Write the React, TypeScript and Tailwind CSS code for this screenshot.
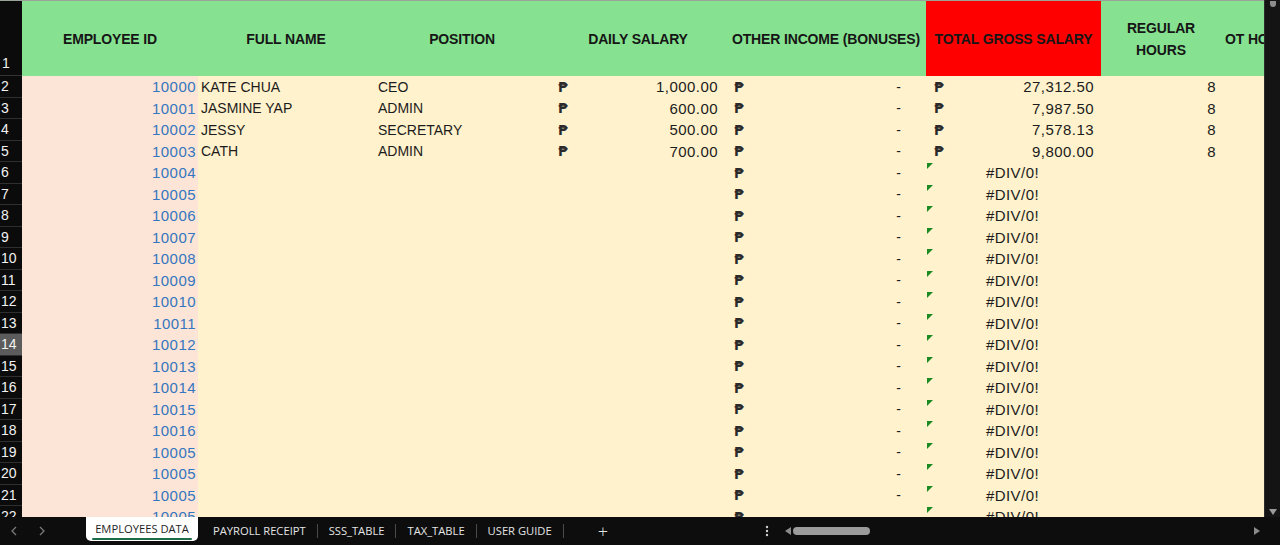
const cols = "grid grid-cols-[22px_176px_176px_176px_176px_200px_175px_120px_100px]";

const filled = [
  { id: "10000", name: "KATE CHUA", pos: "CEO", daily: "1,000.00", gross: "27,312.50" },
  { id: "10001", name: "JASMINE YAP", pos: "ADMIN", daily: "600.00", gross: "7,987.50" },
  { id: "10002", name: "JESSY", pos: "SECRETARY", daily: "500.00", gross: "7,578.13" },
  { id: "10003", name: "CATH", pos: "ADMIN", daily: "700.00", gross: "9,800.00" },
];

const blankIds = [
  "10004", "10005", "10006", "10007", "10008", "10009", "10010", "10011", "10012",
  "10013", "10014", "10015", "10016", "10005", "10005", "10005", "10005",
];

const rows = [
  ...filled.map((r) => ({ ...r, hours: "8", error: false })),
  ...blankIds.map((id) => ({ id, name: "", pos: "", daily: "", gross: "", hours: "", error: true })),
];

const tabs = ["PAYROLL RECEIPT", "SSS_TABLE", "TAX_TABLE", "USER GUIDE"];

const num = "text-[15px] tracking-[0.45px]";

function Peso() {
  return <span className="font-['DejaVu_Sans',sans-serif] text-[14px] font-bold text-[#2a2a2a]">₱</span>;
}

function HeaderRow() {
  const th = "flex items-center justify-center text-center font-bold text-[14px] tracking-[-0.15px] leading-[22px] text-[#161616]";
  return (
    <div className={`${cols} h-[76px] border-t border-[#9aa39a]`}>
      <div className="flex items-end bg-[#0b0b0b] pl-[2px] pb-[1px] text-[14px] text-[#f2f2f2] border-b border-[#333]">1</div>
      <div className={`${th} bg-[#86e291]`}>EMPLOYEE ID</div>
      <div className={`${th} bg-[#86e291]`}>FULL NAME</div>
      <div className={`${th} bg-[#86e291]`}>POSITION</div>
      <div className={`${th} bg-[#86e291]`}>DAILY SALARY</div>
      <div className={`${th} bg-[#86e291] whitespace-nowrap`}>OTHER INCOME (BONUSES)</div>
      <div className={`${th} bg-[#ff0000] text-[#2b0000]`}>TOTAL GROSS SALARY</div>
      <div className={`${th} bg-[#86e291]`}>
        REGULAR
        <br />
        HOURS
      </div>
      <div className={`${th} bg-[#86e291] justify-start pl-[4px] whitespace-nowrap`}>OT HOURS</div>
    </div>
  );
}

type RowData = (typeof rows)[number];

function DataRow({ row, n }: { row: RowData; n: number }) {
  const cell = "flex items-center h-full text-[14px] leading-none text-[#1c1c1c] bg-[#fff2cc] whitespace-nowrap overflow-hidden";
  return (
    <div className={`${cols} h-[21.5px]`}>
      <div
        className={`flex items-center pl-[1px] text-[14px] leading-none text-[#f2f2f2] border-b border-[#2f2f2f] ${
          n === 14 ? "bg-[#5c5c5c]" : "bg-[#0b0b0b]"
        }`}
      >
        {n}
      </div>
      <div className={`flex items-center justify-end pr-[2px] bg-[#fce4d6] leading-none text-[#3476bf] ${num}`}>{row.id}</div>
      <div className={`${cell} pl-[3px]`}>{row.name}</div>
      <div className={`${cell} pl-[4px]`}>{row.pos}</div>
      <div className={`${cell} justify-between px-2`}>
        {row.daily ? (
          <>
            <Peso />
            <span className={num}>{row.daily}</span>
          </>
        ) : null}
      </div>
      <div className={`${cell} justify-between pl-[8px] pr-[25px]`}>
        <Peso />
        <span>-</span>
      </div>
      <div className={`${cell} relative ${row.error ? "justify-center pr-[2px]" : "justify-between pl-[8px] pr-[7px]"}`}>
        {row.error ? (
          <>
            <svg className="absolute left-[1px] top-[1px]" width="6" height="6" viewBox="0 0 6 6">
              <polygon points="0,0 6,0 0,6" fill="#1c8a23" />
            </svg>
            <span className={num}>#DIV/0!</span>
          </>
        ) : (
          <>
            <Peso />
            <span className={num}>{row.gross}</span>
          </>
        )}
      </div>
      <div className={`${cell} justify-end pr-[5px] ${num}`}>{row.hours}</div>
      <div className={cell}></div>
    </div>
  );
}

function BottomBar() {
  return (
    <div className="flex h-[28px] items-start bg-[#0d0d0d] font-['Open_Sans',sans-serif] text-[11.2px] text-[#e4e4e4]">
      <div className="flex h-full w-[86px] items-center gap-[20px] pl-[10px] text-[#7a7a7a]">
        <svg width="8" height="10" viewBox="0 0 8 10">
          <path d="M6 1 L2 5 L6 9" fill="none" stroke="currentColor" strokeWidth="1.3" />
        </svg>
        <svg width="8" height="10" viewBox="0 0 8 10">
          <path d="M2 1 L6 5 L2 9" fill="none" stroke="currentColor" strokeWidth="1.3" />
        </svg>
      </div>
      <div className="flex h-[24px] w-[112px] flex-col items-center justify-center rounded-b-[5px] bg-white text-[#1f1f1f]">
        <span className="mt-[3px] leading-[14px]">EMPLOYEES DATA</span>
        <span className="mt-[2px] h-[2px] w-[100px] rounded-full bg-[#1d6b47]" />
      </div>
      <div className="ml-[4px] flex h-full items-center">
        {tabs.map((t) => (
          <div key={t} className="flex items-center">
            <span className="px-[11px] pt-[1px]">{t}</span>
            <span className="h-[14px] w-px bg-[#4a4a4a]" />
          </div>
        ))}
        <span className="ml-[34px] text-[18px] font-light leading-none text-[#e6e6e6]">+</span>
      </div>
      <div className="ml-[157px] flex h-full items-center">
        <svg width="4" height="12" viewBox="0 0 4 12" className="text-[#cfcfcf]">
          <circle cx="2" cy="2" r="1.2" fill="currentColor" />
          <circle cx="2" cy="6" r="1.2" fill="currentColor" />
          <circle cx="2" cy="10" r="1.2" fill="currentColor" />
        </svg>
        <svg width="6" height="8" viewBox="0 0 6 8" className="ml-[16px]">
          <polygon points="6,0 0,4 6,8" fill="#8a8a8a" />
        </svg>
        <span className="ml-[2px] h-[8px] w-[77px] rounded-full bg-[#9b9b9b]" />
        <svg width="6" height="8" viewBox="0 0 6 8" className="ml-[384px]">
          <polygon points="0,0 6,4 0,8" fill="#8a8a8a" />
        </svg>
      </div>
    </div>
  );
}

export default function App() {
  return (
    <div className="flex h-[545px] w-[1280px] flex-col overflow-hidden bg-[#0d0d0d] font-['Liberation_Sans',Arial,sans-serif]">
      <div className="flex h-[517px]">
        <div className="w-[1265px] overflow-hidden border-r border-[#2c2c2c] bg-[#fff2cc]">
          <HeaderRow />
          {rows.map((r, i) => (
            <DataRow key={i} row={r} n={i + 2} />
          ))}
        </div>
        <div className="flex w-[15px] flex-col items-center justify-between bg-[#141414] pb-[2px]">
          <span className="mt-[1px] h-[6px] w-[6px] rounded-b-full bg-[#8c8c8c]" />
          <svg width="8" height="6" viewBox="0 0 8 6">
            <polygon points="0,0 8,0 4,6" fill="#9a9a9a" />
          </svg>
        </div>
      </div>
      <BottomBar />
    </div>
  );
}
